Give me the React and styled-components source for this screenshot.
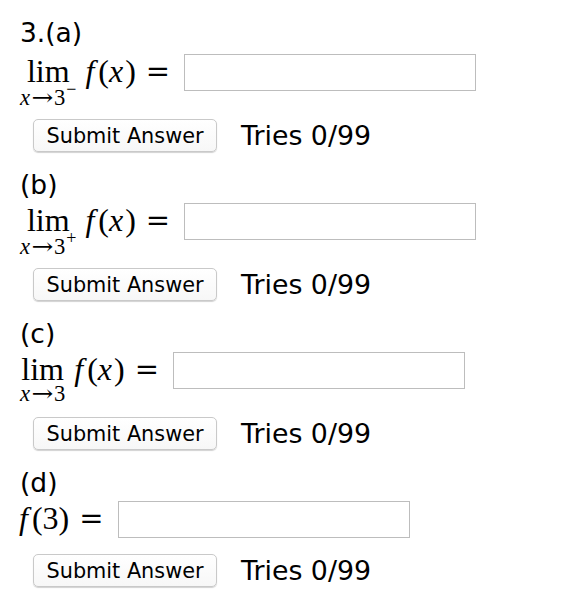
import React from 'react';
import styled, { createGlobalStyle } from 'styled-components';

const GlobalStyle = createGlobalStyle`
  body {
    margin: 0;
    background: #ffffff;
    color: #000000;
  }
`;

const parts = [
  { label: '3.(a)', kind: 'lim', sup: '−' },
  { label: '(b)', kind: 'lim', sup: '+' },
  { label: '(c)', kind: 'lim' },
  { label: '(d)', kind: 'value' },
];

const App = () => {
  return (
    <Page>
      <GlobalStyle />
      {parts.map((p, i) => {
        const isValue = p.kind === 'value';
        return (
          <Part key={i} $first={i === 0}>
            <Label>{p.label}</Label>
            <MathRow $first={i === 0} $short={isValue}>
              <MathExpr>
                {isValue ? (
                  <Fn>
                    <Var $after={4}>f</Var>(3)
                  </Fn>
                ) : (
                  <>
                    <LimBlock>
                      <LimWord>lim</LimWord>
                      <LimSub>
                        <SubVar>x</SubVar>
                        <Arrow>→</Arrow>3{p.sup && <Sup>{p.sup}</Sup>}
                      </LimSub>
                    </LimBlock>
                    <Fn $gap>
                      <Var $after={4}>f</Var>(<Var $after={2}>x</Var>)
                    </Fn>
                  </>
                )}
                <Equals>=</Equals>
              </MathExpr>
              <AnswerInput type="text" />
            </MathRow>
            <AnswerRow $short={isValue}>
              <SubmitButton type="button">Submit Answer</SubmitButton>
              <Tries>Tries 0/99</Tries>
            </AnswerRow>
          </Part>
        );
      })}
    </Page>
  );
};

const Page = styled.div`
  padding: 18px 0 0 19px;
  width: 564px;
  height: 596px;
  box-sizing: border-box;
  overflow: hidden;
`;

const Part = styled.section`
  margin-top: ${(p) => (p.$first ? '0' : '18px')};
`;

const Label = styled.div`
  font-family: 'DejaVu Sans', Verdana, sans-serif;
  font-size: 26.5px;
  line-height: 30px;
  padding-left: 1px;
`;

const MathRow = styled.div`
  display: flex;
  align-items: flex-start;
  margin-top: ${(p) => (p.$first ? '6px' : '3px')};
  height: ${(p) => (p.$short ? '37px' : '48px')};
`;

const MathExpr = styled.div`
  display: flex;
  align-items: flex-start;
  font-family: 'Liberation Serif', 'Times New Roman', serif;
  font-size: 32px;
  line-height: 35px;
`;

const LimBlock = styled.span`
  display: inline-flex;
  flex-direction: column;
  align-items: center;
  margin-left: 1px;
`;

const LimWord = styled.span`
  line-height: 35px;
`;

const LimSub = styled.span`
  font-size: 22.6px;
  line-height: 12px;
  white-space: nowrap;
`;

const SubVar = styled.span`
  font-family: 'Liberation Serif', serif;
  font-style: italic;
  margin-right: 1px;
`;

const Arrow = styled.span`
  font-family: 'DejaVu Serif', serif;
  font-size: 22.6px;
  display: inline-block;
  transform: scaleX(1.15);
  margin: 0 2px;
`;

const Sup = styled.sup`
  font-size: 18px;
  line-height: 0;
  vertical-align: 10px;
  margin-left: 1px;
`;

const Fn = styled.span`
  margin-left: ${(p) => (p.$gap ? '9px' : '0')};
  white-space: nowrap;
`;

const Var = styled.span`
  font-style: italic;
  margin-right: ${(p) => p.$after || 0}px;
`;

const Equals = styled.span`
  font-family: 'DejaVu Serif', serif;
  font-size: 29px;
  margin-left: 10px;
`;

const AnswerInput = styled.input`
  box-sizing: border-box;
  width: 292px;
  height: 37px;
  margin-left: 14px;
  border: 1px solid #bdbdbd;
  background: #ffffff;
  padding: 4px 6px;
  font-size: 20px;
  outline: none;
`;

const AnswerRow = styled.div`
  display: flex;
  align-items: center;
  gap: 24px;
  margin-top: ${(p) => (p.$short ? '16px' : '17px')};
  padding-left: 14px;
`;

const SubmitButton = styled.button`
  box-sizing: border-box;
  width: 184px;
  height: 33px;
  padding: 0;
  border: 1px solid #c9c9c9;
  border-radius: 5px;
  background: linear-gradient(#ffffff, #f7f7f7);
  box-shadow: 0 1px 1px rgba(0, 0, 0, 0.18);
  font-family: 'DejaVu Sans', Verdana, sans-serif;
  font-size: 20.8px;
  color: #000000;
  cursor: pointer;
`;

const Tries = styled.span`
  font-family: 'DejaVu Sans', Verdana, sans-serif;
  font-size: 26.8px;
`;

export default App;
